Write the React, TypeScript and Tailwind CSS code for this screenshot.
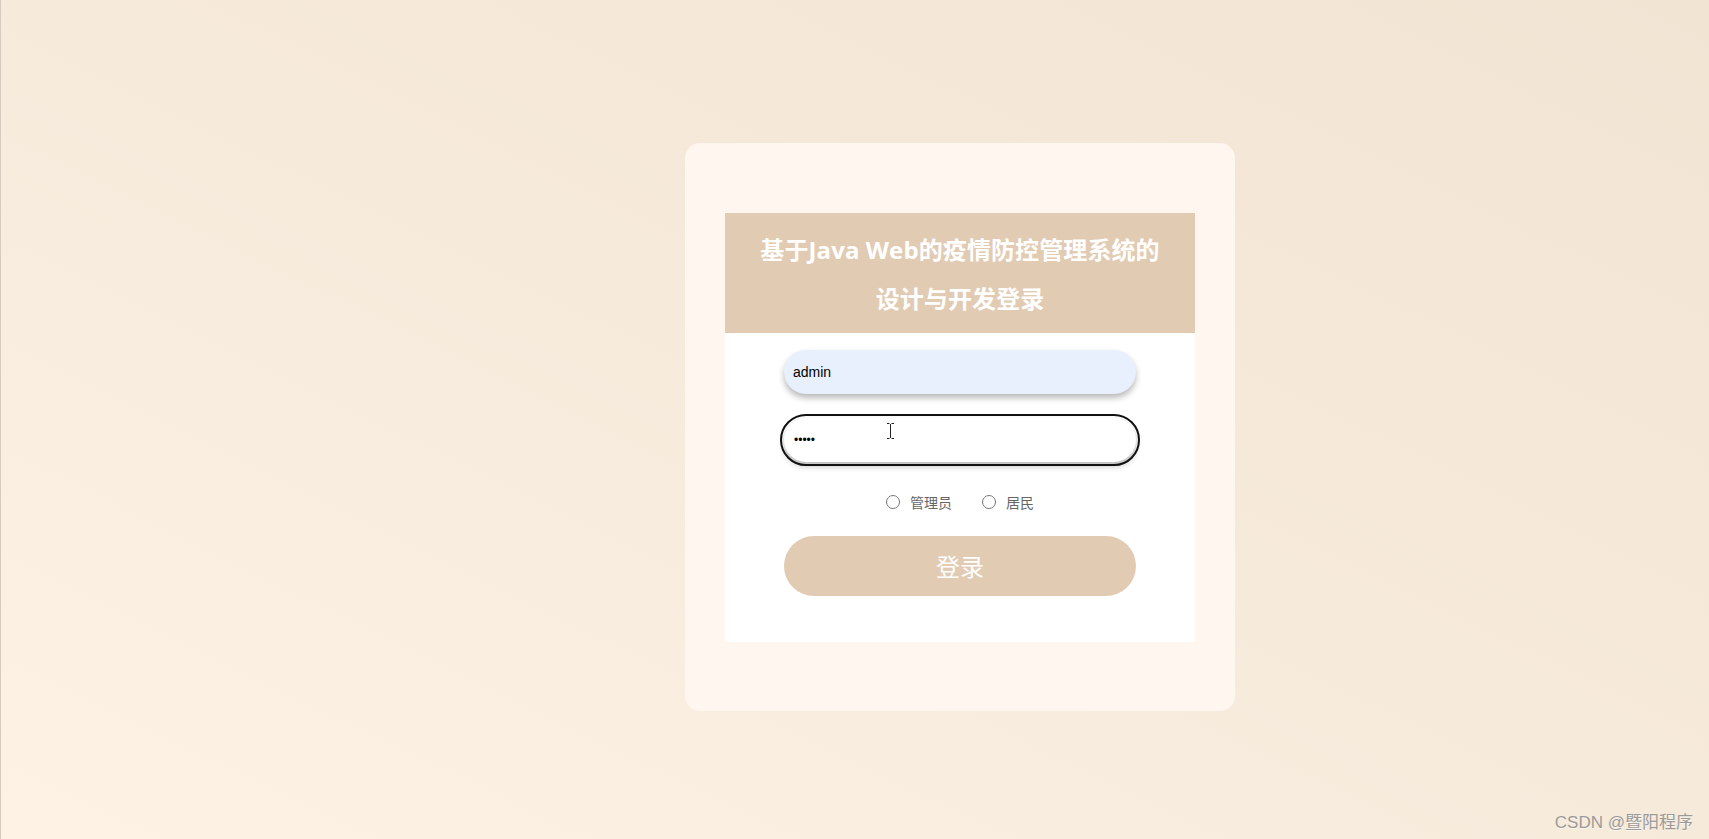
import React from "react";

const cjk = { fontFamily: '"Noto Sans CJK SC", sans-serif' };
const arial = { fontFamily: '"Liberation Sans", Arial, sans-serif' };

function Radio({ label }: { label: string }) {
  return (
    <label className="flex items-center gap-[10px] text-[14px] leading-5 text-[#666]" style={cjk}>
      <span className="block h-[14px] w-[14px] rounded-full border border-[#767676] bg-white" />
      {label}
    </label>
  );
}

export default function App() {
  return (
    <div className="relative min-h-screen w-full overflow-hidden border-l border-[#d6cbbf] bg-gradient-to-tr from-[#fdf2e4] via-[#f6eadb] to-[#f2e4d3] pl-[684px] pt-[143px]">
      <div className="flex h-[568px] w-[550px] flex-col rounded-[15px] bg-[#fef6ef] px-10 pt-[70px]">
        <div className="bg-white">
          <div
            className="h-[120px] bg-[#e2cbb3] px-4 pb-[10px] pt-[12px] text-center text-[24px] font-bold leading-[49px] tracking-[0.1px] text-white"
            style={{ fontFamily: '"Open Sans", "Noto Sans CJK SC", sans-serif' }}
          >
            基于Java Web的疫情防控管理系统的
            <br />
            设计与开发登录
          </div>
          <div className="flex h-[309px] flex-col items-center pt-[17px]">
            <input
              readOnly
              defaultValue="admin"
              className="h-[44px] w-[352px] rounded-full bg-[#e8f0fe] px-[9px] text-[14px] text-black shadow-[0_4px_6px_rgba(0,0,0,0.28)] outline-none"
              style={arial}
            />
            <div className="relative mt-6">
              <input
                readOnly
                type="password"
                defaultValue="admin"
                className="h-[44px] w-[352px] rounded-full bg-white px-[10px] text-[12px] text-black shadow-[0_4px_6px_rgba(0,0,0,0.28)] outline-2 outline-offset-2 outline-[#111]"
                style={arial}
              />
              <svg
                className="pointer-events-none absolute left-[102px] top-[5px]"
                width="9"
                height="16"
                viewBox="0 0 9 16"
              >
                <path d="M1 0.5h2.5M5.5 0.5H8M1 15.5h2.5M5.5 15.5H8M4.5 1v14" stroke="#222" strokeWidth="1" fill="none" />
              </svg>
            </div>
            <div className="mt-[30px] flex h-5 items-center">
              <Radio label="管理员" />
              <div className="w-[30px]" />
              <Radio label="居民" />
            </div>
            <button
              className="mt-6 h-[60px] w-[352px] rounded-full bg-[#e2cbb3] text-[24px] text-white"
              style={cjk}
            >
              登录
            </button>
          </div>
        </div>
      </div>
      <div
        className="absolute bottom-[4px] right-[16px] text-[17px] text-[#9c9a97] [text-shadow:0_1px_0_rgba(255,255,255,0.6)]"
        style={{ fontFamily: '"Liberation Sans", "Noto Sans CJK SC", sans-serif' }}
      >
        CSDN @暨阳程序
      </div>
    </div>
  );
}
